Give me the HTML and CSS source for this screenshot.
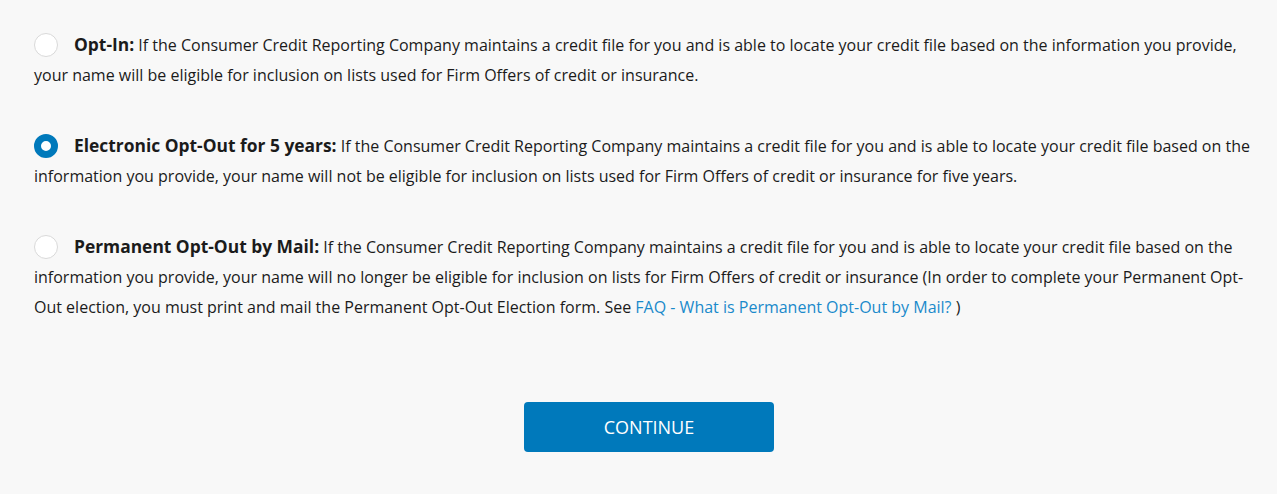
FILE: index.html
```html
<!DOCTYPE html>
<html>
<head>
<meta charset="utf-8">
<link rel="stylesheet" href="styles.css">
</head>
<body>
<main class="page">
  <form class="options">
    <div class="option">
      <span class="radio"></span><strong class="label">Opt-In:</strong> If the Consumer Credit Reporting Company maintains a credit file for you and is able to locate your credit file based on the information you provide, your name will be eligible for inclusion on lists used for Firm Offers of credit or insurance.
    </div>
    <div class="option">
      <span class="radio checked"></span><strong class="label">Electronic Opt-Out for 5 years:</strong> If the Consumer Credit Reporting Company maintains a credit file for you and is able to locate your credit file based on the information you provide, your name will not be eligible for inclusion on lists used for Firm Offers of credit or insurance for five years.
    </div>
    <div class="option">
      <span class="radio"></span><strong class="label">Permanent Opt-Out by Mail:</strong> If the Consumer Credit Reporting Company maintains a credit file for you and is able to locate your credit file based on the information you provide, your name will no longer be eligible for inclusion on lists for Firm Offers of credit or insurance (In order to complete your Permanent Opt-Out election, you must print and mail the Permanent Opt-Out Election form. See <a class="link" href="#">FAQ - What is Permanent Opt-Out by Mail?</a> )
    </div>
    <div class="actions">
      <button type="button" class="btn">CONTINUE</button>
    </div>
  </form>
</main>
</body>
</html>
```

FILE: styles.css
```css
html, body {
  margin: 0;
  padding: 0;
  background: #f8f8f8;
}
body {
  font-family: "Open Sans", "Liberation Sans", sans-serif;
  font-size: 16px;
  color: #1b1b1b;
}
.page {
  padding: 30px 26px 42px 34px;
}
.option {
  line-height: 30.4px;
  margin-bottom: 40px;
}
.option:last-of-type {
  margin-bottom: 0;
}
.radio {
  display: inline-block;
  box-sizing: border-box;
  width: 24px;
  height: 24px;
  border-radius: 50%;
  background: #fff;
  border: 1px solid #d9d9d9;
  vertical-align: -6px;
  margin-right: 16px;
}
.radio.checked {
  border: 7px solid #0079bb;
}
.label {
  font-weight: 700;
  font-size: 17.4px;
  line-height: 1;
}
.link {
  color: #1a8acb;
  text-decoration: none;
}
.actions {
  display: flex;
  justify-content: center;
  margin-top: 79px;
  padding-left: 13px;
}
.btn {
  width: 250px;
  height: 50px;
  border: none;
  border-radius: 4px;
  background: #0079bb;
  color: #fff;
  font-family: "Open Sans", "Liberation Sans", sans-serif;
  font-size: 18px;
  cursor: pointer;
}
```
